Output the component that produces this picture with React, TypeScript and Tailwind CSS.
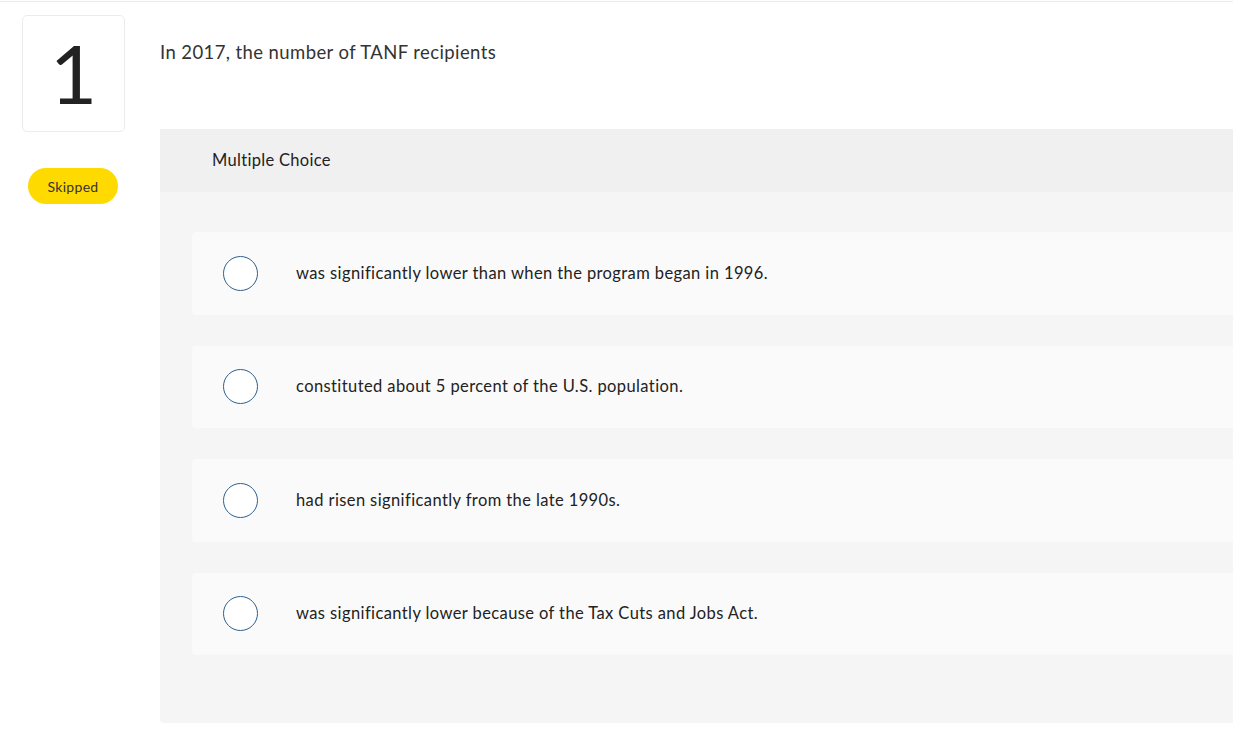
import React from "react";

const options = [
  "was significantly lower than when the program began in 1996.",
  "constituted about 5 percent of the U.S. population.",
  "had risen significantly from the late 1990s.",
  "was significantly lower because of the Tax Cuts and Jobs Act.",
];

export default function App() {
  return (
    <div
      className="w-[1233px] h-[741px] overflow-hidden bg-white text-[#222]"
      style={{ fontFamily: "Lato, 'Open Sans', sans-serif" }}
    >
      <div className="h-[2px] bg-white border-b border-[#ececec]" />
      <div className="flex pt-[13px]">
        <div className="w-[160px] shrink-0 flex flex-col items-start">
          <div className="ml-[22px] w-[103px] h-[117px] rounded-[5px] border border-[#ececec] flex items-center justify-center text-[82px] leading-none text-[#222] pb-[3px]">
            1
          </div>
          <div className="ml-[28px] mt-[36px] w-[90px] h-[36px] rounded-full bg-[#ffda00] flex items-center justify-center text-[14px] tracking-[0.3px] text-[#333]">
            Skipped
          </div>
        </div>
        <div className="flex-1 min-w-0">
          <div className="pt-[26px] h-[114px] text-[18.5px] tracking-[0.4px] leading-[22px] text-[#333]">
            In 2017, the number of TANF recipients
          </div>
          <div className="bg-[#f5f5f5] rounded-bl-[4px] h-[594px]">
            <div className="h-[63px] bg-[#f0f0f0] flex items-center pl-[52px] text-[16.5px] tracking-[0.3px] text-[#222]">
              Multiple Choice
            </div>
            <div className="pt-[40px] pl-[32px] flex flex-col gap-[31px]">
              {options.map((o) => (
                <div
                  key={o}
                  className="h-[82.5px] bg-[#fafafa] rounded-l-[4px] flex items-center"
                >
                  <div className="ml-[31px] w-[35px] h-[35px] rounded-full border-[1.5px] border-[#2d5f8f] bg-white shrink-0" />
                  <div className="ml-[38px] text-[16.5px] tracking-[0.4px] text-[#222]">{o}</div>
                </div>
              ))}
            </div>
          </div>
        </div>
      </div>
    </div>
  );
}
